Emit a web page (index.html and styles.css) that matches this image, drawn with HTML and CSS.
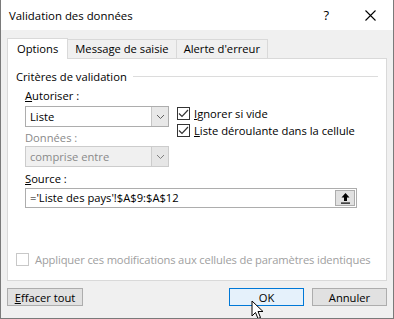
FILE: index.html
```html
<!DOCTYPE html>
<html lang="fr">
<head>
  <meta charset="UTF-8">
  <title>Validation des données</title>
  <link rel="stylesheet" href="styles.css">
</head>
<body>
  <div class="dialog">
    <div class="titlebar">
      <span class="title">Validation des données</span>
      <span class="help">?</span>
      <svg class="close" width="11" height="11" viewBox="0 0 11 11">
        <path d="M0.5 0.5 L10.5 10.5 M10.5 0.5 L0.5 10.5" stroke="#000" stroke-width="1.1" fill="none"/>
      </svg>
    </div>

    <div class="content">
      <div class="tabs">
        <div class="tab active">Options</div>
        <div class="tab">Message de saisie</div>
        <div class="tab">Alerte d'erreur</div>
      </div>

      <div class="panel">
        <div class="group-title">
          <span>Critères de validation</span>
          <div class="rule"></div>
        </div>

        <div class="criteria">
          <div class="left-col">
            <div class="label"><u>A</u>utoriser :</div>
            <div class="select">
              <span class="select-value">Liste</span>
              <span class="select-btn">
                <svg width="9" height="6" viewBox="0 0 9 6"><path d="M1 1 L4.5 4.5 L8 1" stroke="#606060" fill="none"/></svg>
              </span>
            </div>
            <div class="label disabled">Données :</div>
            <div class="select disabled">
              <span class="select-value">comprise entre</span>
              <span class="select-btn">
                <svg width="9" height="6" viewBox="0 0 9 6"><path d="M1 1 L4.5 4.5 L8 1" stroke="#808080" fill="none"/></svg>
              </span>
            </div>
          </div>
          <div class="right-col">
            <label class="check">
              <span class="box">
                <svg width="11" height="9" viewBox="0 0 11 9"><path d="M1 4.5 L4 7.5 L10 1" stroke="#333" stroke-width="1.2" fill="none"/></svg>
              </span>
              <span><u>I</u>gnorer si vide</span>
            </label>
            <label class="check">
              <span class="box">
                <svg width="11" height="9" viewBox="0 0 11 9"><path d="M1 4.5 L4 7.5 L10 1" stroke="#333" stroke-width="1.2" fill="none"/></svg>
              </span>
              <span><u>L</u>iste déroulante dans la cellule</span>
            </label>
          </div>
        </div>

        <div class="label"><u>S</u>ource :</div>
        <div class="source">
          <span class="source-value">='Liste des pays'!$A$9:$A$12</span>
          <span class="ref-btn">
            <svg width="11" height="12" viewBox="0 0 11 12">
              <path d="M5.5 1 L1.5 5.5 L4 5.5 L4 9 L7 9 L7 5.5 L9.5 5.5 Z" fill="#000"/>
              <rect x="1" y="10.5" width="9" height="1.2" fill="#000"/>
            </svg>
          </span>
        </div>

        <label class="check apply">
          <span class="box"></span>
          <span>Appliquer ces modifications aux cellules de paramètres identiques</span>
        </label>
      </div>

      <div class="footer">
        <button class="btn"><u>E</u>ffacer tout</button>
        <div class="spacer"></div>
        <button class="btn default">OK</button>
        <button class="btn">Annuler</button>
      </div>
    </div>

    <svg class="cursor" width="14" height="21" viewBox="0 0 14 21">
      <path d="M1 1 L1 16 L4.5 12.5 L7 18.5 L9.5 17.5 L7 11.5 L12 11.5 Z" fill="#fff" stroke="#000" stroke-width="1"/>
    </svg>
  </div>
</body>
</html>
```

FILE: styles.css
```css
* {
  box-sizing: border-box;
  margin: 0;
  padding: 0;
}
body {
  font-family: "Open Sans", "Noto Sans", sans-serif;
  font-size: 11.2px;
  color: #000;
  background: #fff;
}

.dialog {
  position: relative;
  width: 394px;
  height: 319px;
  border: 1px solid #7a7a7a;
  border-top: none;
  background: #f0f0f0;
  display: flex;
  flex-direction: column;
  overflow: hidden;
}

.titlebar {
  height: 30px;
  background: #fff;
  display: flex;
  align-items: center;
  padding-left: 8px;
  padding-right: 17px;
}
.title {
  font-size: 11.4px;
  flex: 1;
}
.help {
  font-size: 13px;
  margin-right: 36px;
}

.content {
  flex: 1;
  padding: 8px 6px 0 6px;
  display: flex;
  flex-direction: column;
}

.tabs {
  display: flex;
  height: 20px;
  align-items: flex-end;
}
.tab {
  height: 19px;
  padding: 0 7px;
  border: 1px solid #d9d9d9;
  border-bottom: none;
  border-left: none;
  background: #f0f0f0;
  line-height: 17px;
}
.tab.active {
  height: 21px;
  background: #fff;
  border-left: 1px solid #d9d9d9;
  padding: 0 9px;
  line-height: 20px;
  position: relative;
  top: 1px;
}

.panel {
  background: #fff;
  border: 1px solid #d9d9d9;
  height: 223px;
  padding: 9px 8px 0 8px;
  display: flex;
  flex-direction: column;
}

.group-title {
  display: flex;
  align-items: center;
  gap: 6px;
  height: 16px;
}
.rule {
  flex: 1;
  height: 1px;
  background: #dcdcdc;
}

.criteria {
  display: flex;
  padding-left: 9px;
  margin-top: 3px;
}
.left-col {
  width: 144px;
  display: flex;
  flex-direction: column;
}
.right-col {
  padding-left: 8px;
  padding-top: 19px;
  display: flex;
  flex-direction: column;
  gap: 2px;
}

.label {
  height: 17px;
  line-height: 17px;
}
.label.disabled {
  color: #8a8a8a;
  margin-top: 2px;
}

.select {
  height: 21px;
  margin-top: 2px;
  border: 1px solid #adadad;
  background: #fff;
  display: flex;
}
.select.disabled {
  margin-top: 0;
  background: #f0f0f0;
  border-color: #cccccc;
  color: #8a8a8a;
}
.select-value {
  flex: 1;
  padding-left: 4px;
  line-height: 19px;
}
.select-btn {
  width: 17px;
  border-left: 1px solid #c6c6c6;
  background: #e8e8e8;
  display: flex;
  align-items: center;
  justify-content: center;
}
.select.disabled .select-btn {
  background: #e6e6e6;
  border-left-color: #cccccc;
}

.check {
  display: flex;
  align-items: center;
  gap: 4px;
  height: 15px;
  white-space: nowrap;
}
.box {
  width: 13px;
  height: 13px;
  flex-shrink: 0;
  border: 1px solid #333;
  background: #fff;
  display: flex;
  align-items: center;
  justify-content: center;
}

.panel > .label {
  margin-top: 3px;
  padding-left: 9px;
}
.source {
  margin-left: 9px;
  margin-top: 1px;
  width: 332px;
  height: 20px;
  border: 1px solid #adadad;
  display: flex;
}
.source-value {
  flex: 1;
  padding-left: 4px;
  line-height: 18px;
}
.ref-btn {
  width: 20px;
  margin: 1px;
  border: 1px solid #adadad;
  background: #e1e1e1;
  display: flex;
  align-items: center;
  justify-content: center;
}

.check.apply {
  margin-top: 44px;
  color: #a0a0a0;
  gap: 6px;
  letter-spacing: -0.15px;
}
.check.apply .box {
  border-color: #c8c8c8;
}

.footer {
  display: flex;
  padding-top: 7px;
  gap: 8px;
}
.spacer {
  flex: 1;
}
.btn {
  font-family: inherit;
  font-size: 11.2px;
  height: 18px;
  width: 75px;
  background: #e1e1e1;
  border: 1px solid #adadad;
  color: #000;
}
.btn:first-child {
  width: 76px;
}
.btn.default {
  background: #e5f1fb;
  border: 1px solid #0078d7;
}

.cursor {
  position: absolute;
  left: 250px;
  top: 300px;
}
```
